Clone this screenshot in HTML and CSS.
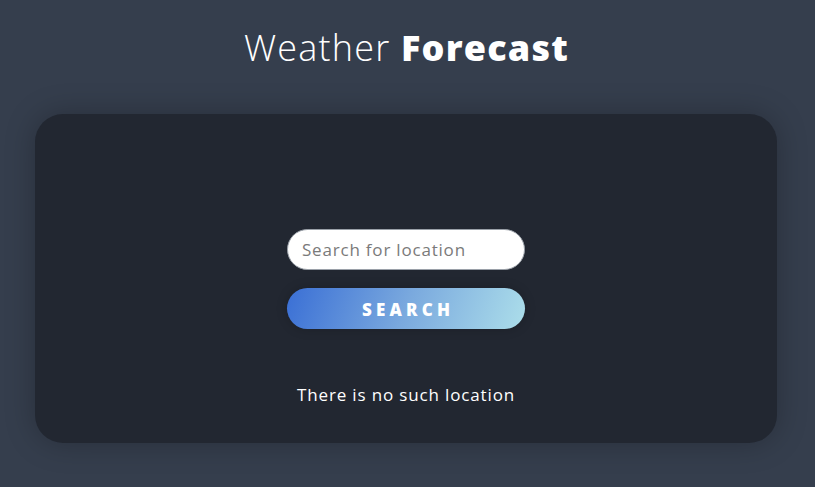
FILE: index.html
```html
<!DOCTYPE html>
<html>
<head>
<meta charset="utf-8">
<link rel="stylesheet" href="styles.css">
</head>
<body>
<div class="page">
  <h1 class="title"><span class="light">Weather</span> <span class="bold">Forecast</span></h1>
  <div class="card">
    <form class="search">
      <input class="field" type="text" placeholder="Search for location">
      <button class="btn" type="button">SEARCH</button>
    </form>
    <p class="msg">There is no such location</p>
  </div>
</div>
</body>
</html>
```

FILE: styles.css
```css
html, body {
  margin: 0;
  padding: 0;
  height: 100%;
}
body {
  background: #353e4d;
  font-family: "Open Sans", "DejaVu Sans", sans-serif;
  color: #fff;
}
.page {
  display: flex;
  flex-direction: column;
  align-items: center;
  padding-top: 25px;
}
.title {
  margin: 0;
  font-size: 36px;
  line-height: 46px;
  font-weight: normal;
  letter-spacing: 1.2px;
  margin-left: -2px;
}
.title .light {
  font-weight: 300;
}
.title .bold {
  font-weight: 800;
}
.card {
  margin: 43px 0 0 35px;
  align-self: flex-start;
  width: 742px;
  height: 329px;
  box-sizing: border-box;
  background: #222731;
  border-radius: 28px;
  box-shadow: 0 0 30px rgba(0,0,0,0.25);
  display: flex;
  flex-direction: column;
  align-items: center;
  padding-top: 115px;
}
.search {
  display: flex;
  flex-direction: column;
  gap: 18px;
  margin: 0;
}
.field {
  width: 238px;
  height: 41px;
  box-sizing: border-box;
  border: 1px solid #9aa0a8;
  border-radius: 21px;
  background: #fff;
  padding: 0 14px;
  font-family: "Open Sans", sans-serif;
  font-size: 17px;
  letter-spacing: 0.8px;
  color: #333;
  outline: none;
}
.field::placeholder {
  color: #7a7a7a;
}
.btn {
  width: 238px;
  height: 41px;
  border: none;
  border-radius: 21px;
  background: linear-gradient(110deg, #3a6fd5 0%, #7aa9de 50%, #acdeea 100%);
  color: #fff;
  font-family: "Open Sans", sans-serif;
  font-weight: 800;
  font-size: 17px;
  letter-spacing: 4.2px;
  padding: 2px 0 0 4px;
  box-shadow: 0 0 12px rgba(0,0,0,0.2);
  cursor: pointer;
}
.msg {
  margin: 55px 0 0;
  font-size: 17px;
  line-height: 22px;
  letter-spacing: 0.85px;
}
```
